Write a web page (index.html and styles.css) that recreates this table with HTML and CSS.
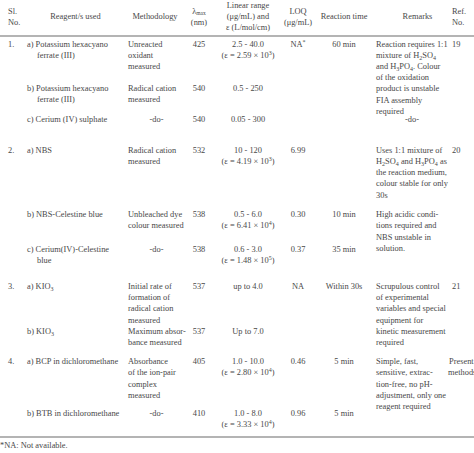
FILE: index.html
```html
<!DOCTYPE html>
<html>
<head>
<meta charset="utf-8">
<link rel="stylesheet" href="styles.css">
</head>
<body>
<div class="page">
<table class="data">
<colgroup>
<col class="c-sl"><col class="c-reag"><col class="c-meth"><col class="c-lmax"><col class="c-lin"><col class="c-loq"><col class="c-time"><col class="c-rem"><col class="c-ref">
</colgroup>
<thead>
<tr>
<th class="sl">Sl.<br>No.</th>
<th>Reagent/s used</th>
<th>Methodology</th>
<th>λ<sub>max</sub><br>(nm)</th>
<th>Linear range<br>(μg/mL) and<br>ε (L/mol/cm)</th>
<th>LOQ<br>(μg/mL)</th>
<th>Reaction time</th>
<th class="rem-h">Remarks</th>
<th class="ref">Ref.<br>No.</th>
</tr>
</thead>
<tbody>
<tr class="r1a">
<td class="sl">1.</td>
<td class="reag">a) Potassium hexacyano<br>ferrate (III)</td>
<td class="meth">Unreacted<br>oxidant<br>measured</td>
<td class="num">425</td>
<td class="num">2.5 - 40.0<br>(ε = 2.59 × 10<sup>3</sup>)</td>
<td class="num">NA<sup>*</sup></td>
<td class="num">60 min</td>
<td class="rem"><div class="spill">Reaction requires 1:1<br>mixture of H<sub>2</sub>SO<sub>4</sub><br>and H<sub>3</sub>PO<sub>4</sub>. Colour<br>of the oxidation<br>product is unstable<br>FIA assembly<br>required</div></td>
<td class="ref">19</td>
</tr>
<tr class="r1b">
<td class="sl"></td>
<td class="reag">b) Potassium hexacyano<br>ferrate (III)</td>
<td class="meth">Radical cation<br>measured</td>
<td class="num">540</td>
<td class="num">0.5 - 250</td>
<td class="num"></td>
<td class="num"></td>
<td class="rem"></td>
<td class="ref"></td>
</tr>
<tr class="r1c">
<td class="sl"></td>
<td class="reag">c) Cerium (IV) sulphate</td>
<td class="meth center">-do-</td>
<td class="num">540</td>
<td class="num">0.05 - 300</td>
<td class="num"></td>
<td class="num"></td>
<td class="rem center">-do-</td>
<td class="ref"></td>
</tr>
<tr class="r2a">
<td class="sl">2.</td>
<td class="reag">a) NBS</td>
<td class="meth">Radical cation<br>measured</td>
<td class="num">532</td>
<td class="num">10 - 120<br>(ε = 4.19 × 10<sup>3</sup>)</td>
<td class="num">6.99</td>
<td class="num"></td>
<td class="rem"><div class="spill">Uses 1:1 mixture of<br>H<sub>2</sub>SO<sub>4</sub> and H<sub>3</sub>PO<sub>4</sub> as<br>the reaction medium,<br>colour stable for only<br>30s</div></td>
<td class="ref">20</td>
</tr>
<tr class="r2b">
<td class="sl"></td>
<td class="reag">b) NBS-Celestine blue</td>
<td class="meth">Unbleached dye<br>colour measured</td>
<td class="num">538</td>
<td class="num">0.5 - 6.0<br>(ε = 6.41 × 10<sup>4</sup>)</td>
<td class="num">0.30</td>
<td class="num">10 min</td>
<td class="rem"><div class="spill">High acidic condi-<br>tions required and<br>NBS unstable in<br>solution.</div></td>
<td class="ref"></td>
</tr>
<tr class="r2c">
<td class="sl"></td>
<td class="reag">c) Cerium(IV)-Celestine<br>blue</td>
<td class="meth center">-do-</td>
<td class="num">538</td>
<td class="num">0.6 - 3.0<br>(ε = 1.48 × 10<sup>5</sup>)</td>
<td class="num">0.37</td>
<td class="num">35 min</td>
<td class="rem"></td>
<td class="ref"></td>
</tr>
<tr class="r3a">
<td class="sl">3.</td>
<td class="reag">a) KIO<sub>3</sub></td>
<td class="meth">Initial rate of<br>formation of<br>radical cation<br>measured</td>
<td class="num">537</td>
<td class="num">up to 4.0</td>
<td class="num">NA</td>
<td class="num">Within 30s</td>
<td class="rem"><div class="spill">Scrupulous control<br>of experimental<br>variables and special<br>equipment for<br>kinetic measurement<br>required</div></td>
<td class="ref">21</td>
</tr>
<tr class="r3b">
<td class="sl"></td>
<td class="reag">b) KIO<sub>3</sub></td>
<td class="meth">Maximum absor-<br>bance measured</td>
<td class="num">537</td>
<td class="num">Up to 7.0</td>
<td class="num"></td>
<td class="num"></td>
<td class="rem"></td>
<td class="ref"></td>
</tr>
<tr class="r4a">
<td class="sl">4.</td>
<td class="reag">a) BCP in dichloromethane</td>
<td class="meth">Absorbance<br>of the ion-pair<br>complex<br>measured</td>
<td class="num">405</td>
<td class="num">1.0 - 10.0<br>(ε = 2.80 × 10<sup>4</sup>)</td>
<td class="num">0.46</td>
<td class="num">5 min</td>
<td class="rem"><div class="spill">Simple, fast,<br>sensitive, extrac-<br>tion-free, no pH-<br>adjustment, only one<br>reagent required</div></td>
<td class="ref present">Present<br>methods</td>
</tr>
<tr class="r4b">
<td class="sl"></td>
<td class="reag">b) BTB in dichloromethane</td>
<td class="meth center">-do-</td>
<td class="num">410</td>
<td class="num">1.0 - 8.0<br>(ε = 3.33 × 10<sup>4</sup>)</td>
<td class="num">0.96</td>
<td class="num">5 min</td>
<td class="rem"></td>
<td class="ref"></td>
</tr>
</tbody>
</table>
<p class="note">*NA: Not available.</p>
</div>
</body>
</html>
```
FILE: styles.css
```css
html, body {
  margin: 0;
  padding: 0;
  background: #ffffff;
  overflow: hidden;
}
.page {
  width: 474px;
  height: 453px;
  overflow: hidden;
  font-family: "Liberation Serif", "Times New Roman", serif;
  font-size: 8.4px;
  line-height: 11.2px;
  color: #484848;
}
.data {
  border-collapse: collapse;
  table-layout: fixed;
  width: 487px;
}
.c-sl { width: 26px; }
.c-reag { width: 99px; }
.c-meth { width: 60px; }
.c-lmax { width: 28px; }
.c-lin { width: 70px; }
.c-loq { width: 30px; }
.c-time { width: 62px; }
.c-rem { width: 73px; }
.c-ref { width: 39px; }

.data th {
  font-weight: normal;
  text-align: center;
  vertical-align: middle;
  padding: 0 0 1px;
  white-space: nowrap;
  border-bottom: 2px solid #b4b4b4;
}
.data th.sl { text-align: left; padding-left: 8px; }
.data th.rem-h { padding-left: 12px; }
.data th.ref { text-align: left; padding-left: 4px; }

.data td {
  vertical-align: top;
  padding: 0;
  white-space: nowrap;
}
.data tbody tr:first-child td { padding-top: 2px; }

td.sl { padding-left: 8px !important; }
td.reag { padding-left: 11px !important; text-indent: -10px; }
td.meth { padding-left: 3px !important; }
td.num { text-align: center; }
td.rem { padding-left: 1px !important; }
td.ref { padding-left: 4px !important; }
td.present { padding-left: 0 !important; text-indent: 1px; margin-left: -1px; }
td.center { text-align: center; }

.spill {
  height: 11px;
  overflow: visible;
}

sub, sup {
  font-size: 6px;
  line-height: 0;
}
sub { vertical-align: -2px; }
sup { vertical-align: 3px; }
th sub { font-size: 5.5px; vertical-align: -1px; }

.r1a td { padding-bottom: 11px; }
.r1b td { padding-bottom: 8px; }
.r1c td { padding-bottom: 20px; }
.r2a td { padding-bottom: 42px; }
.r2b td { padding-bottom: 12px; }
.r2c td { padding-bottom: 15px; }
.r3a td { padding-bottom: 0; }
.r3b td { padding-bottom: 8px; }
.r4a td { padding-bottom: 7px; }
.r4b td { padding-bottom: 6px; border-bottom: 2px solid #b4b4b4; }

.note {
  margin: 2px 0 0;
}
```
